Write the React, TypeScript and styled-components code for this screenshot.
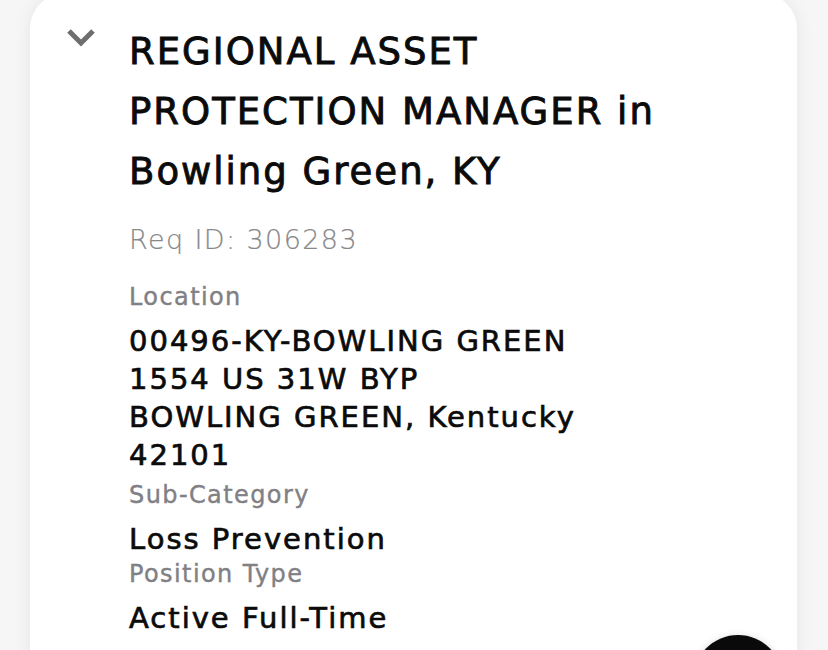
import styled, { createGlobalStyle } from 'styled-components'

const GlobalStyle = createGlobalStyle`
  html, body {
    margin: 0;
    padding: 0;
    background: #f6f6f6;
    overflow: hidden;
  }
  body {
    font-family: 'DejaVu Sans', 'Open Sans', sans-serif;
    -webkit-font-smoothing: antialiased;
  }
`

const Page = styled.div`
  position: relative;
  width: 828px;
  height: 650px;
  padding: 0 31px 0 30px;
  box-sizing: border-box;
  overflow: hidden;
`

const Card = styled.div`
  background: #ffffff;
  border-radius: 34px;
  margin-top: -6px;
  height: 720px;
  box-shadow: 0 0 18px rgba(0, 0, 0, 0.07);
  display: flex;
  padding: 28px 0 0 36px;
  box-sizing: border-box;
`

const Toggle = styled.button`
  width: 30px;
  height: 20px;
  margin-top: 6px;
  padding: 0;
  border: 0;
  background: transparent;
  flex-shrink: 0;
  cursor: pointer;
`

const Content = styled.div`
  margin-left: 33px;
  display: flex;
  flex-direction: column;
`

const Title = styled.h2`
  margin: 0;
  font-size: 37px;
  line-height: 60px;
  font-weight: 400;
  color: #0b0b0b;
  letter-spacing: 2px;
  -webkit-text-stroke: 0.9px #0b0b0b;
`

const ReqId = styled.div`
  margin-top: 18px;
  font-size: 27px;
  line-height: 40px;
  font-weight: 200;
  color: #888888;
  letter-spacing: 1.4px;
  -webkit-text-stroke: 0.2px #888888;
`

const Label = styled.div<{ $gap?: number }>`
  margin-top: ${({ $gap }) => $gap ?? 0}px;
  font-size: 24px;
  line-height: 32px;
  font-weight: 400;
  color: #808085;
  letter-spacing: 1.4px;
  -webkit-text-stroke: 0.4px #808085;
`

const Value = styled.div`
  margin-top: 9px;
  font-size: 29px;
  line-height: 38px;
  font-weight: 400;
  color: #0b0b0b;
  letter-spacing: 2px;
  -webkit-text-stroke: 0.7px #0b0b0b;
`

const Fab = styled.button`
  position: absolute;
  left: 693px;
  top: 635px;
  width: 90px;
  height: 90px;
  border-radius: 50%;
  border: 0;
  background: #0a0a0a;
  box-shadow: 0 2px 8px rgba(0, 0, 0, 0.2);
`

const Chevron = () => (
  <svg width="30" height="20" viewBox="0 0 30 20">
    <path d="M3 3 L15 15 L27 3" fill="none" stroke="#6e6e6e" strokeWidth="5" />
  </svg>
)

const App = () => {
  return (
    <Page>
      <GlobalStyle />
      <Card>
        <Toggle aria-label="Collapse">
          <Chevron />
        </Toggle>
        <Content>
          <Title>
            REGIONAL ASSET
            <br />
            PROTECTION MANAGER in
            <br />
            Bowling Green, KY
          </Title>
          <ReqId>Req ID: 306283</ReqId>
          <Label $gap={21}>Location</Label>
          <Value>
            00496-KY-BOWLING GREEN
            <br />
            1554 US 31W BYP
            <br />
            BOWLING GREEN, Kentucky
            <br />
            42101
          </Value>
          <Label $gap={5}>Sub-Category</Label>
          <Value>Loss Prevention</Value>
          <Label>Position Type</Label>
          <Value>Active Full-Time</Value>
        </Content>
      </Card>
      <Fab aria-label="Apply" />
    </Page>
  )
}

export default App
